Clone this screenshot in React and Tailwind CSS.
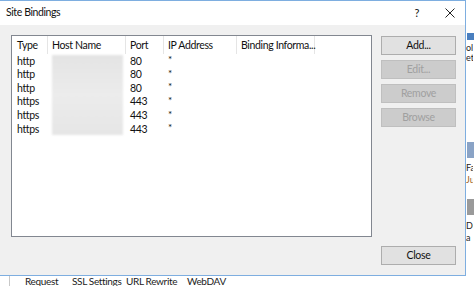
import React from 'react';

const rows = [
  { type: 'http', port: '80' },
  { type: 'http', port: '80' },
  { type: 'http', port: '80' },
  { type: 'https', port: '443' },
  { type: 'https', port: '443' },
  { type: 'https', port: '443' },
];

function Btn({ children, disabled }) {
  return (
    <div
      className={
        'w-[75px] h-[19px] flex items-center justify-center border text-[10.5px] tracking-[-0.3px] ' +
        (disabled
          ? 'bg-[#cccccc] border-[#bfbfbf] text-[#a0a0a0]'
          : 'bg-[#e1e1e1] border-[#adadad] text-[#111]')
      }
    >
      {children}
    </div>
  );
}

export default function App() {
  return (
    <div
      className="w-[474px] h-[286px] overflow-hidden bg-white flex flex-col whitespace-nowrap"
      style={{ fontFamily: 'Lato, "Open Sans", sans-serif' }}
    >
      <div className="flex h-[276px]">
        {/* dialog */}
        <div className="w-[466px] h-[276px] flex flex-col border-t border-r border-b border-[#7eaee0] bg-[#f0f0f0]">
          <div className="h-[24px] bg-white flex items-center pl-[6px] pr-[10px] text-[10.5px] tracking-[-0.4px] text-[#111]">
            <span className="flex-1">Site Bindings</span>
            <span className="mr-[26px] text-[11px]">?</span>
            <svg width="10" height="10" viewBox="0 0 10 10">
              <path d="M0.5 0.5 L9.5 9.5 M9.5 0.5 L0.5 9.5" stroke="#222" strokeWidth="1" fill="none" />
            </svg>
          </div>
          <div className="flex flex-1 pl-[11px] pt-[10px] pr-[9px] pb-[10px] gap-[9px]">
            <div className="w-[361px] h-[202px] bg-white border border-[#828790] text-[10.5px] tracking-[-0.35px] text-[#111] leading-none">
              <div className="flex h-[18px] items-center">
                <div className="w-[36px] pl-[5px] h-full flex items-center border-r border-[#e5e5e5]">Type</div>
                <div className="w-[78px] pl-[4px] h-full flex items-center border-r border-[#e5e5e5]">Host Name</div>
                <div className="w-[38px] pl-[4px] h-full flex items-center border-r border-[#e5e5e5]">Port</div>
                <div className="w-[73px] pl-[4px] h-full flex items-center border-r border-[#e5e5e5]">IP Address</div>
                <div className="w-[78px] pl-[4px] h-full flex items-center border-r border-[#e5e5e5]">Binding Informa...</div>
              </div>
              <div className="relative">
                <div className="absolute left-[40px] top-[1px] w-[71px] h-[80px] bg-gradient-to-b from-[#e4e4e4] via-[#ececec] to-[#e6e6e6] blur-[1px]" />
                {rows.map((r, i) => (
                  <div key={i} className="flex h-[13.6px] items-center relative">
                    <div className="w-[36px] pl-[5px]">{r.type}</div>
                    <div className="w-[78px]" />
                    <div className="w-[38px] pl-[4px]">{r.port}</div>
                    <div className="pl-[4px] text-[10px] -mt-[3px]">*</div>
                  </div>
                ))}
              </div>
            </div>
            <div className="flex flex-col justify-between w-[75px]">
              <div className="flex flex-col gap-[5px] pt-[1px]">
                <Btn>Add...</Btn>
                <Btn disabled>Edit...</Btn>
                <Btn disabled>Remove</Btn>
                <Btn disabled>Browse</Btn>
              </div>
              <Btn>Close</Btn>
            </div>
          </div>
        </div>
        {/* background window sliver */}
        <div className="flex-1 relative text-[9px] text-[#222] leading-none overflow-hidden">
          <div className="absolute left-[1px] top-[33px] w-[7px] h-[7px] bg-[#4a7fbf]" />
          <div className="absolute left-[0px] top-[43px] w-[7px] overflow-hidden">ol</div>
          <div className="absolute left-[0px] top-[53px] w-[7px] overflow-hidden">et</div>
          <div className="absolute left-[1px] top-[142px] w-[7px] h-[16px] bg-[#8aa3c6]" />
          <div className="absolute left-[0px] top-[163px] w-[7px] overflow-hidden">Fa</div>
          <div className="absolute left-[0px] top-[175px] w-[7px] overflow-hidden text-[#a06020]">Ju</div>
          <div className="absolute left-[1px] top-[199px] w-[7px] h-[16px] bg-[#9a9a9a]" />
          <div className="absolute left-[0px] top-[221px] w-[7px] overflow-hidden">Du</div>
          <div className="absolute left-[0px] top-[233px] w-[7px] overflow-hidden">a</div>
        </div>
      </div>
      {/* bottom tabs of underlying window */}
      <div className="flex-1 flex items-start text-[10px] tracking-[-0.35px] text-[#222]">
        <div className="w-[10px] border-r border-[#c8c8c8] h-full" />
        <div className="flex leading-none pt-[0px] pl-[15px]">
          <span className="w-[47px] shrink-0">Request</span>
          <span className="w-[54px] shrink-0">SSL Settings</span>
          <span className="w-[61px] shrink-0">URL Rewrite</span>
          <span className="shrink-0">WebDAV</span>
        </div>
      </div>
    </div>
  );
}
